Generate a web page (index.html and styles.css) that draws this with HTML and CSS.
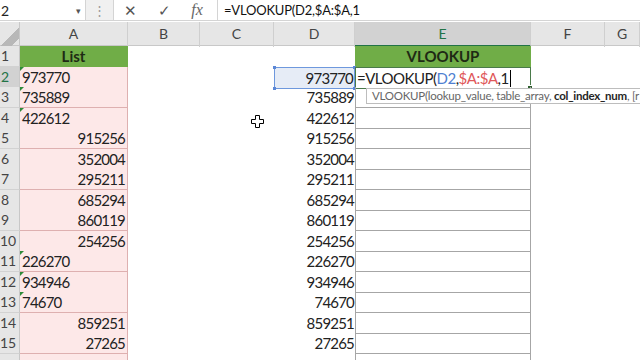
FILE: index.html
```html
<!DOCTYPE html>
<html lang="en">
<head>
  <meta charset="UTF-8" />
  <title>VLOOKUP</title>
  <link rel="stylesheet" href="styles.css">
</head>
<body>
  <div class="fbar">
    <div class="namebox"><span>2</span><span class="arrow">&#9662;</span></div>
    <div class="grip">&#8942;</div>
    <div class="btns">
      <span class="btn">&#10005;</span>
      <span class="btn">&#10003;</span>
      <span class="btn fx">fx</span>
    </div>
    <div class="formula">=VLOOKUP(D2,$A:$A,1</div>
  </div>

  <div class="sheet">
    <div class="row head">
      <div class="rh corner"></div>
      <div class="ch">A</div><div class="ch">B</div><div class="ch">C</div>
      <div class="ch">D</div><div class="ch sel">E</div><div class="ch">F</div><div class="ch">G</div>
    </div>
    <div class="row">
      <div class="rh">1</div>
      <div class="c a green">List</div><div class="c"></div><div class="c"></div>
      <div class="c"></div><div class="c e green">VLOOKUP</div><div class="c"></div><div class="c"></div>
    </div>
    <div class="row">
      <div class="rh sel">2</div>
      <div class="c a txt">973770</div><div class="c"></div><div class="c"></div>
      <div class="c d ref">973770<i class="h1"></i><i class="h2"></i><i class="h3"></i><i class="h4"></i></div>
      <div class="c e edit">=VLOOKUP(<span class="blue">D2</span>,<span class="red">$A:$A</span>,1<b class="caret"></b><i class="fill"></i></div>
      <div class="c"></div><div class="c"></div>
    </div>
    <div id="rows"></div>
  </div>

  <div class="tip">VLOOKUP(lookup_value, table_array, <b>col_index_num</b>, [r</div>

  <svg class="cursor" width="13" height="13" viewBox="0 0 13 13">
    <path d="M4.5 0.5h4v4h4v4h-4v4h-4v-4h-4v-4h4z" fill="#fff" stroke="#000" stroke-width="1"/>
  </svg>

  <script>
    const listA = [
      ["735889", true], ["422612", true], ["915256"], ["352004"], ["295211"],
      ["685294"], ["860119"], ["254256"], ["226270", true], ["934946", true],
      ["74670", true], ["859251"], ["27265"], [""]
    ];
    const colD = ["735889", "422612", "915256", "352004", "295211", "685294", "860119",
      "254256", "226270", "934946", "74670", "859251", "27265", ""];

    const rows = document.getElementById('rows');
    listA.forEach((item, i) => {
      const row = document.createElement('div');
      row.className = 'row';
      const cls = item[1] ? 'c a txt' : 'c a';
      // last row only peeks in at the bottom edge, its number is out of view
      const num = i < listA.length - 1 ? i + 3 : '';
      row.innerHTML =
        `<div class="rh">${num}</div>` +
        `<div class="${cls}">${item[0]}</div><div class="c"></div><div class="c"></div>` +
        `<div class="c d">${colD[i]}</div><div class="c e"></div><div class="c"></div><div class="c"></div>`;
      rows.appendChild(row);
    });
  </script>
</body>
</html>
```

FILE: styles.css
```css
body {
  margin: 0;
  width: 640px;
  height: 360px;
  overflow: hidden;
  background: #fff;
  font-family: Lato, "Open Sans", sans-serif;
  color: #222;
  position: relative;
}

/* formula bar */
.fbar {
  display: flex;
  height: 20px;
  border-bottom: 1px solid #d4d4d4;
  background: #fff;
}
.namebox {
  width: 86px;
  display: flex;
  justify-content: space-between;
  align-items: center;
  font-size: 14px;
  padding: 0 4px 0 1px;
  box-sizing: border-box;
  border-right: 1px solid #d4d4d4;
}
.namebox .arrow { font-size: 9px; color: #555; }
.grip {
  width: 27px;
  background: #f0f0f0;
  color: #9a9a9a;
  text-align: center;
  font-size: 13px;
  line-height: 20px;
  border-right: 1px solid #d4d4d4;
}
.btns {
  width: 104px;
  display: flex;
  justify-content: space-around;
  align-items: center;
  padding: 0 4px 0 0;
  box-sizing: border-box;
  border-right: 1px solid #d4d4d4;
}
.btn { font-size: 15px; color: #555; }
.fx {
  font-family: "Liberation Serif", serif;
  font-style: italic;
  font-size: 16px;
  color: #666;
}
.formula {
  padding-left: 6px;
  font-size: 13px;
  line-height: 20px;
  color: #111;
  letter-spacing: -0.2px;
}

/* sheet */
.sheet {
  margin-top: 1px;
}
.row {
  display: grid;
  grid-template-columns: 20px 108px 72px 74px 81px 176px 74px 1fr;
  height: 20.5px;
}
.row.head {
  height: 23px;
  background: #e6e6e6;
  border-bottom: 1px solid #c8c8c8;
}
.ch {
  text-align: center;
  font-size: 14px;
  line-height: 23px;
  color: #444;
  border-right: 1px solid #cfcfcf;
}
.ch.sel {
  background: #d2d2d2;
  color: #217346;
  border-bottom: 2px solid #217346;
}
.rh {
  background: #e6e6e6;
  border-right: 1px solid #c8c8c8;
  border-bottom: 1px solid #d2d2d2;
  box-sizing: border-box;
  font-size: 14px;
  line-height: 20px;
  color: #444;
  text-align: right;
  padding-right: 10px;
  overflow: hidden;
}
.rh.sel { background: #d2d2d2; color: #217346; }
.rh.corner {
  border-bottom: none;
  background: linear-gradient(135deg, transparent 55%, #b8b8b8 56%, #b8b8b8 80%, transparent 81%);
}

.c {
  position: relative;
  font-size: 15px;
  line-height: 20px;
  letter-spacing: -0.8px;
  text-align: right;
  padding: 0 2px;
  white-space: nowrap;
  box-sizing: border-box;
}
.c.a {
  background: #fde8e8;
  border-right: 1px solid #deb0b0;
  border-bottom: 1px solid #deb0b0;
}
.c.a.txt { text-align: left; }
.c.a.txt::before {
  content: "";
  position: absolute;
  top: 0;
  left: 0;
  border-top: 4px solid #2e8b3a;
  border-right: 4px solid transparent;
}
.c.e {
  border-left: 1px solid #a6a6a6;
  border-right: 1px solid #a6a6a6;
  border-bottom: 1px solid #a6a6a6;
}
.c.green {
  background: #70ad47;
  text-align: center;
  font-weight: bold;
  color: #1e2a14;
  letter-spacing: 0;
  border-color: #70ad47;
}
.c.d { padding-right: 1px; }
.c.ref {
  background: #e6ecf6;
  border: 1px solid #6e98dd;
}
.ref i {
  position: absolute;
  width: 3px;
  height: 3px;
  background: #5b87d6;
}
.ref .h1 { top: -2px; left: -2px; }
.ref .h2 { top: -2px; right: -2px; }
.ref .h3 { bottom: -2px; left: -2px; }
.ref .h4 { bottom: -2px; right: -2px; }

.c.edit {
  text-align: left;
  border: 1px solid #4a7a4a;
  padding-left: 1px;
  letter-spacing: -0.5px;
  overflow: visible;
}
.blue { color: #4f7fd1; }
.red { color: #e0585a; }
.caret {
  display: inline-block;
  width: 1px;
  height: 17px;
  background: #000;
  vertical-align: -3px;
  margin-left: 1px;
}
.fill {
  position: absolute;
  right: -3px;
  bottom: -3px;
  width: 4px;
  height: 4px;
  background: #2f5f2f;
  border: 1px solid #fff;
}

/* overlays */
.tip {
  position: absolute;
  left: 366px;
  top: 88px;
  width: 274px;
  box-sizing: border-box;
  height: 16px;
  padding: 0 0 0 5px;
  background: #fff;
  border: 1px solid #bdbdbd;
  border-right: none;
  font-size: 11.5px;
  line-height: 14px;
  color: #666;
  white-space: nowrap;
  overflow: hidden;
  letter-spacing: -0.25px;
}
.tip b { color: #262626; }
.cursor {
  position: absolute;
  left: 251px;
  top: 115px;
}
```
